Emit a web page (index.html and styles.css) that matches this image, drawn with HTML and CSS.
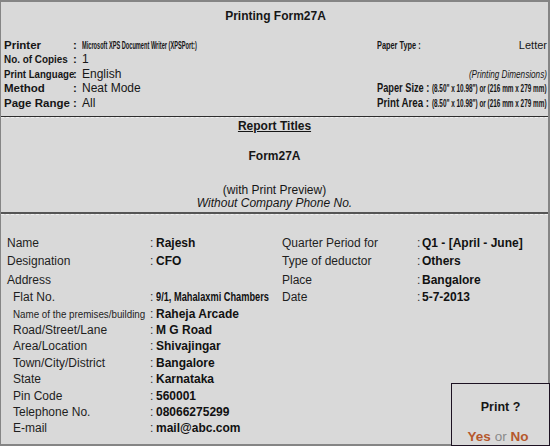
FILE: index.html
```html
<!DOCTYPE html>
<html>
<head>
<meta charset="utf-8">
<title>Printing Form27A</title>
<link rel="stylesheet" href="styles.css">
</head>
<body>
<div class="window">
  <section class="head">
    <h1 class="title">Printing Form27A</h1>
    <div class="settings">
      <div class="set-left">
        <div class="kv"><span class="k">Printer</span><span class="c">:</span><span class="v"><span class="fit printer-name">Microsoft XPS Document Writer (XPSPort:)</span></span></div>
        <div class="kv"><span class="k"><span class="fit copies-label">No. of Copies</span></span><span class="c">:</span><span class="v">1</span></div>
        <div class="kv"><span class="k"><span class="fit lang-label">Print Language</span></span><span class="c">:</span><span class="v">English</span></div>
        <div class="kv"><span class="k">Method</span><span class="c">:</span><span class="v">Neat Mode</span></div>
        <div class="kv"><span class="k">Page Range</span><span class="c">:</span><span class="v">All</span></div>
      </div>
      <div class="set-right">
        <div class="pr split"><span class="fit ptype-label">Paper Type :</span><span class="letter">Letter</span></div>
        <div class="pr"></div>
        <div class="pr end"><span class="fit-r dims">(Printing Dimensions)</span></div>
        <div class="pr"><span class="pl"><span class="fit psize-label">Paper Size :</span></span><span class="pv"><span class="fit-r pdim">(8.50" x 10.98") or (216 mm x 279 mm)</span></span></div>
        <div class="pr"><span class="pl"><span class="fit parea-label">Print Area :</span></span><span class="pv"><span class="fit-r pdim">(8.50" x 10.98") or (216 mm x 279 mm)</span></span></div>
      </div>
    </div>
  </section>

  <section class="titles">
    <h2 class="rt">Report Titles</h2>
    <div class="form-name">Form27A</div>
    <div class="sub first">(with Print Preview)</div>
    <div class="sub it">Without Company Phone No.</div>
  </section>

  <section class="details">
    <div class="dcol left">
      <div class="d-row tall"><span class="dk">Name</span><span class="dc">:</span><span class="dv">Rajesh</span></div>
      <div class="d-row tall"><span class="dk">Designation</span><span class="dc">:</span><span class="dv">CFO</span></div>
      <div class="d-row tall"><span class="dk">Address</span></div>
      <div class="d-row"><span class="dk ind">Flat No.</span><span class="dc">:</span><span class="dv"><span class="fit flat-val">9/1, Mahalaxmi Chambers</span></span></div>
      <div class="d-row"><span class="dk ind"><span class="fit premises-label">Name of the premises/building</span></span><span class="dc">:</span><span class="dv">Raheja Arcade</span></div>
      <div class="d-row"><span class="dk ind">Road/Street/Lane</span><span class="dc">:</span><span class="dv">M G Road</span></div>
      <div class="d-row"><span class="dk ind">Area/Location</span><span class="dc">:</span><span class="dv">Shivajingar</span></div>
      <div class="d-row"><span class="dk ind">Town/City/District</span><span class="dc">:</span><span class="dv">Bangalore</span></div>
      <div class="d-row"><span class="dk ind">State</span><span class="dc">:</span><span class="dv">Karnataka</span></div>
      <div class="d-row"><span class="dk ind">Pin Code</span><span class="dc">:</span><span class="dv">560001</span></div>
      <div class="d-row"><span class="dk ind">Telephone No.</span><span class="dc">:</span><span class="dv">08066275299</span></div>
      <div class="d-row"><span class="dk ind">E-mail</span><span class="dc">:</span><span class="dv">mail@abc.com</span></div>
    </div>
    <div class="dcol right">
      <div class="d-row tall"><span class="dk">Quarter Period for</span><span class="dc">:</span><span class="dv">Q1 - [April - June]</span></div>
      <div class="d-row tall"><span class="dk">Type of deductor</span><span class="dc">:</span><span class="dv">Others</span></div>
      <div class="d-row tall"><span class="dk">Place</span><span class="dc">:</span><span class="dv">Bangalore</span></div>
      <div class="d-row"><span class="dk">Date</span><span class="dc">:</span><span class="dv">5-7-2013</span></div>
    </div>
  </section>
</div>

<div class="print-box">
  <div class="pq">Print ?</div>
  <div class="yn"><span class="opt">Yes</span> <span class="or">or</span> <span class="opt">No</span></div>
</div>
</body>
</html>
```

FILE: styles.css
```css
* {
  box-sizing: border-box;
  margin: 0;
  padding: 0;
}

html, body {
  width: 550px;
  height: 446px;
}

body {
  position: relative;
  overflow: hidden;
  background: #d9d9d9;
  font-family: "Liberation Sans", Arial, sans-serif;
  font-size: 12px;
  color: #161616;
}

.window {
  width: 550px;
  height: 446px;
  border: 2px solid #858585;
  border-left-width: 1px;
  background: #d9d9d9;
  display: flex;
  flex-direction: column;
}

/* condensed text helpers */
.fit, .fit-r {
  display: inline-block;
  white-space: nowrap;
  flex-shrink: 0;
}
.fit { transform-origin: 0 50%; }
.fit-r { transform-origin: 100% 50%; }

/* ---------- header ---------- */
.head {
  height: 115px;
  flex-shrink: 0;
  border-bottom: 1px solid #2e2e2e;
  padding: 7px 1px 0 3px;
}

.title {
  font-size: 12px;
  font-weight: bold;
  line-height: 14px;
  text-align: center;
}

.settings {
  margin-top: 14.75px;
  display: grid;
  grid-template-columns: 1fr 170px;
}

.kv, .pr {
  height: 14.5px;
  line-height: 14.5px;
  white-space: nowrap;
}

.kv {
  display: flex;
}

.k {
  width: 69px;
  flex-shrink: 0;
  font-weight: bold;
  font-size: 11.5px;
}

.c {
  width: 9px;
  flex-shrink: 0;
  font-weight: bold;
  font-size: 11.5px;
}

.v {
  font-size: 12px;
}

.printer-name {
  font-size: 11.5px;
  font-weight: bold;
  transform: scaleX(0.49);
}

.copies-label { transform: scaleX(0.86); }
.lang-label { transform: scaleX(0.84); }

.pr {
  display: flex;
}
.pr.split { justify-content: space-between; }
.pr.end { justify-content: flex-end; }

.ptype-label {
  font-size: 11.5px;
  font-weight: bold;
  transform: scaleX(0.64);
}

.letter {
  font-size: 11px;
}

.dims {
  font-size: 11.5px;
  font-style: italic;
  transform: scaleX(0.71);
}

.pl {
  flex: 0 0 55px;
  min-width: 0;
}

.pv {
  flex: 1 1 0;
  min-width: 0;
  display: flex;
  justify-content: flex-end;
}

.psize-label {
  font-size: 12px;
  font-weight: bold;
  transform: scaleX(0.77);
}

.parea-label {
  font-size: 12px;
  font-weight: bold;
  transform: scaleX(0.81);
}

.pdim {
  font-size: 11.5px;
  font-weight: bold;
  transform: scaleX(0.555);
}

/* ---------- report titles ---------- */
.titles {
  height: 97px;
  flex-shrink: 0;
  border-top: 1px dashed #f1f1f1;
  border-bottom: 2px solid #555;
  padding-top: 1px;
  text-align: center;
}

.rt {
  font-size: 12px;
  font-weight: bold;
  line-height: 14px;
  text-decoration: underline;
}

.form-name {
  margin-top: 16px;
  font-weight: bold;
  line-height: 14px;
}

.sub {
  line-height: 13px;
}
.sub.first { margin-top: 21px; }
.sub.it { font-style: italic; }

/* ---------- details ---------- */
.details {
  flex: 1;
  border-top: 1px dashed #f1f1f1;
  padding: 18.75px 0 0 6px;
  display: grid;
  grid-template-columns: 275px 1fr;
  align-items: start;
}

.d-row {
  display: flex;
  height: 16.4px;
  line-height: 16.4px;
  white-space: nowrap;
}
.d-row.tall {
  height: 18.5px;
  line-height: 18.5px;
}

.dk {
  flex-shrink: 0;
  color: #1e1e1e;
}
.left .dk { width: 143px; }
.right .dk { width: 135px; }
.dk.ind { padding-left: 6px; }

.dc {
  flex-shrink: 0;
  color: #333;
}
.left .dc { width: 6px; }
.right .dc { width: 5px; }

.dv {
  font-weight: bold;
  color: #111;
}

.flat-val {
  font-size: 12px;
  font-weight: bold;
  transform: scaleX(0.77);
}

.premises-label {
  font-size: 11px;
  transform: scaleX(0.89);
}

/* ---------- print dialog ---------- */
.print-box {
  position: absolute;
  left: 451px;
  top: 383px;
  width: 99px;
  height: 63px;
  border: 1px solid #1d1222;
  background: #d9d9d9;
  text-align: center;
}

.pq {
  margin-top: 16px;
  font-size: 12.5px;
  font-weight: bold;
  line-height: 14px;
}

.yn {
  margin-top: 15px;
  font-size: 13.5px;
  line-height: 15px;
  padding-right: 5px;
}

.opt {
  color: #b5582c;
  font-weight: bold;
}

.or {
  color: #8a8a8a;
}
```
